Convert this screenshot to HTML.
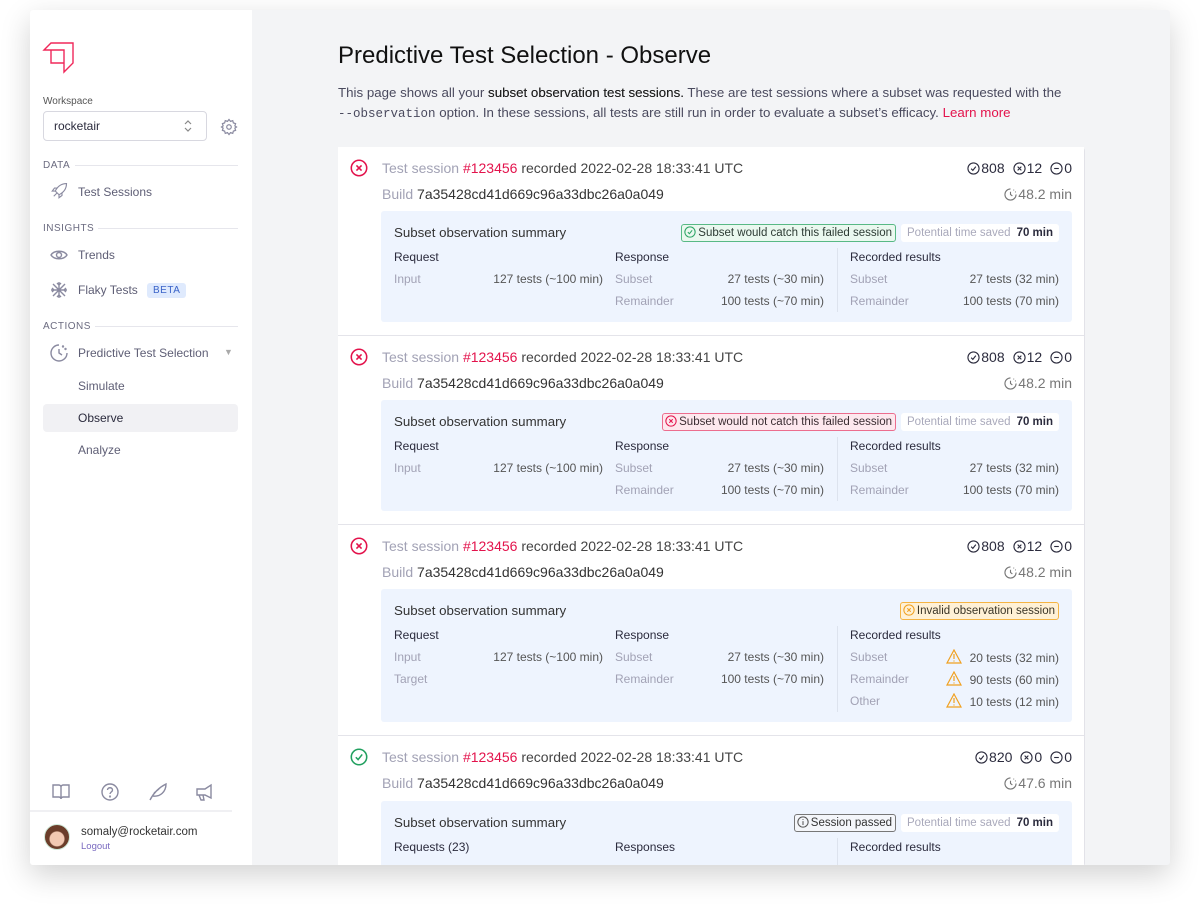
<!DOCTYPE html>
<html><head><meta charset="utf-8"><style>
*{box-sizing:border-box;margin:0;padding:0}
body{width:1200px;height:915px;background:#fff;font-family:"Liberation Sans",sans-serif;color:#2b2b3d;position:relative;overflow:hidden}
.win{position:absolute;left:30px;top:10px;width:1140px;height:855px;background:#f3f4f6;box-shadow:0 10px 30px rgba(0,0,0,.18);overflow:hidden;border-radius:3px}
.side{position:absolute;left:0;top:0;width:222px;height:855px;background:#fff}
.a{position:absolute;white-space:nowrap}
.sec{position:absolute;font-size:10px;letter-spacing:.5px;color:#6b6b80}
.line{position:absolute;height:1px;background:#e6e6ec}
.nav{position:absolute;font-size:12px;color:#5e5e75}
.card{position:absolute;left:308px;width:746px;background:#fff;border-bottom:1px solid #e4e4ea}
.t{position:absolute;font-size:14px;line-height:18px;white-space:nowrap}
.g{color:#a2a2b5}
.r{color:#e3134c}
.box{position:absolute;left:43px;width:691px;background:#eef4fe;border-radius:3px}
.s{position:absolute;font-size:12px;line-height:16px;white-space:nowrap}
.badge{position:absolute;top:13px;height:18px;font-size:11.5px;line-height:16px;border:1px solid;border-radius:3px;padding:0 3px 0 2px;white-space:nowrap}
.badge svg{vertical-align:-2px;margin-right:2px}
.pts{position:absolute;top:13px;height:18px;right:13px;background:#fff;border-radius:3px;font-size:11.5px;line-height:18px;padding:0 6px;color:#a9a9bb;white-space:nowrap}
.pts b{color:#2b2b3d;margin-left:6px}
.div{position:absolute;left:456px;top:37px;width:1px;background:#dde3ee}
.ic{vertical-align:-2px;margin-right:1px}
.st{margin-left:8px}
</style></head><body>
<svg width="0" height="0" style="position:absolute">
<defs>
<symbol id="ok" viewBox="0 0 14 14"><circle cx="7" cy="7" r="6" fill="none" stroke="currentColor" stroke-width="1.2"/><path d="M4.5 7.2L6.3 9L9.5 5" fill="none" stroke="currentColor" stroke-width="1.2"/></symbol>
<symbol id="x" viewBox="0 0 14 14"><circle cx="7" cy="7" r="6" fill="none" stroke="currentColor" stroke-width="1.2"/><path d="M5 5L9 9M9 5L5 9" fill="none" stroke="currentColor" stroke-width="1.2"/></symbol>
<symbol id="m" viewBox="0 0 14 14"><circle cx="7" cy="7" r="6" fill="none" stroke="currentColor" stroke-width="1.2"/><path d="M4.5 7H9.5" fill="none" stroke="currentColor" stroke-width="1.2"/></symbol>
<symbol id="c" viewBox="0 0 14 14"><path d="M7 1A6 6 0 1 0 13 7" fill="none" stroke="currentColor" stroke-width="1.2"/><path d="M7 4V7L9 8.5" fill="none" stroke="currentColor" stroke-width="1.2"/><circle cx="10.5" cy="2.2" r=".6" fill="currentColor"/><circle cx="12.3" cy="4.3" r=".6" fill="currentColor"/></symbol>
</defs></svg>
<div class="win">
<div class="side">
<svg class="a" style="left:12px;top:31px" width="34" height="34" viewBox="0 0 34 34" fill="none" stroke="#f0285a" stroke-width="1.4"><path d="M2 9 L9 2 L31 2 L31 22 L22 31 L22 22 L9 22 L9 9 Z M2 9 L22 9 L22 22"/></svg>
<div class="a" style="left:13px;top:86px;font-size:10px;color:#555">Workspace</div>
<div class="a" style="left:13px;top:101px;width:164px;height:30px;border:1px solid #d8d8e0;border-radius:4px;font-size:12px;line-height:28px;padding-left:10px">rocketair</div>
<svg class="a" style="left:153px;top:109px" width="10" height="14" viewBox="0 0 10 14" fill="none" stroke="#888" stroke-width="1.2"><path d="M2 5 L5 2 L8 5 M2 9 L5 12 L8 9"/></svg>
<svg class="a" style="left:190px;top:108px" width="18" height="18" viewBox="0 0 24 24" fill="none" stroke="#8a8aa0" stroke-width="1.6"><circle cx="12" cy="12" r="3"/><path d="M12 2l2 2.5 3-1 .8 3 3 1-1 3L22 12l-2.2 1.5 1 3-3 1-.8 3-3-1L12 22l-2-2.5-3 1-.8-3-3-1 1-3L2 12l2.2-1.5-1-3 3-1 .8-3 3 1z"/></svg>
<div class="sec" style="left:13px;top:150px">DATA</div><div class="line" style="left:45px;top:155px;width:163px"></div>
<svg class="a" style="left:20px;top:172px" width="18" height="18" viewBox="0 0 24 24" fill="none" stroke="#8a8aa0" stroke-width="1.5"><path d="M5 19 L9 15 M22 2 C15 2 10 6 7 12 L12 17 C18 14 22 9 22 2Z M7 12 L3 12 L6 8 L10 8 M12 17 L12 21 L16 18 L16 14"/></svg>
<div class="nav" style="left:48px;top:175px">Test Sessions</div>
<div class="sec" style="left:13px;top:213px">INSIGHTS</div><div class="line" style="left:68px;top:218px;width:140px"></div>
<svg class="a" style="left:20px;top:238px" width="18" height="14" viewBox="0 0 18 14" fill="none" stroke="#8a8aa0" stroke-width="1.4"><path d="M1 7 C4 2 14 2 17 7 C14 12 4 12 1 7Z"/><circle cx="9" cy="7" r="2.5"/></svg>
<div class="nav" style="left:48px;top:238px">Trends</div>
<svg class="a" style="left:20px;top:271px" width="18" height="18" viewBox="0 0 18 18" fill="none" stroke="#8a8aa0" stroke-width="1.4"><path d="M9 1V17M1 9H17M3 3L15 15M15 3L3 15M7 2L9 4L11 2M7 16L9 14L11 16M2 7L4 9L2 11M16 7L14 9L16 11"/></svg>
<div class="nav" style="left:48px;top:273px">Flaky Tests</div>
<div class="a" style="left:117px;top:273px;background:#dfeafd;color:#3a63c8;font-size:10px;padding:2px 6px;border-radius:3px;letter-spacing:.5px">BETA</div>
<div class="sec" style="left:13px;top:311px">ACTIONS</div><div class="line" style="left:65px;top:316px;width:143px"></div>
<svg class="a" style="left:20px;top:334px" width="18" height="18" viewBox="0 0 18 18" fill="none" stroke="#8a8aa0" stroke-width="1.4"><path d="M9 1 A8 8 0 1 0 17 9"/><path d="M9 5V9L12 11"/><circle cx="13" cy="2.5" r=".5"/><circle cx="15.5" cy="5" r=".5"/></svg>
<div class="nav" style="left:48px;top:336px">Predictive Test Selection</div>
<div class="a" style="left:194px;top:337px;font-size:9px;color:#aaa">▼</div>
<div class="nav" style="left:48px;top:369px">Simulate</div>
<div class="a" style="left:13px;top:394px;width:195px;height:28px;background:#f1f1f4;border-radius:4px"></div>
<div class="nav" style="left:48px;top:401px;color:#2b2b3d">Observe</div>
<div class="nav" style="left:48px;top:433px">Analyze</div>
<svg class="a" style="left:21px;top:772px" width="170" height="20" viewBox="0 0 170 20" fill="none" stroke="#8a8aa0" stroke-width="1.4"><path d="M2 3H8C9 3 10 4 10 5V17C10 16 9 15 8 15H2Z M18 3H12C11 3 10 4 10 5V17C10 16 11 15 12 15H18Z"/><circle cx="59" cy="10" r="8"/><path d="M56.5 8C56.5 5 61.5 5 61.5 8C61.5 10 59 10 59 12"/><circle cx="59" cy="14.5" r=".4"/><path d="M99 18C103 10 109 5 115 2C115 10 109 15 102 14 M103 11L108 7"/><path d="M160 3V16L154 13H146V7H154Z M148 13L150 18H153L152 13"/></svg>
<div class="line" style="left:0;top:800px;width:202px;height:2px;background:#f0f0f3"></div>
<div class="a" style="left:14px;top:814px;width:26px;height:26px;border-radius:50%;background:radial-gradient(circle at 50% 58%,#f2c9b2 0 7px,#6b3d2a 8px);border:1px solid #cfe8d8"></div>
<div class="a" style="left:51px;top:816px;font-size:11.5px;color:#333">somaly@rocketair.com</div>
<div class="a" style="left:51px;top:831px;font-size:9.5px;color:#7a6ac0">Logout</div>
</div>

<div class="a" style="left:308px;top:32px;font-size:24px;color:#111">Predictive Test Selection - Observe</div>
<div class="a" style="left:308px;top:73px;font-size:13.3px;line-height:20px;color:#4a4a5e">This page shows all your <span style="color:#222;text-shadow:0 0 .3px #222">subset observation test sessions.</span> These are test sessions where a subset was requested with the<br><span style="font-family:'Liberation Mono',monospace;font-size:12.5px">--observation</span> option. In these sessions, all tests are still run in order to evaluate a subset’s efficacy. <span class="r">Learn more</span></div>

<div class="a" style="left:308px;top:137px;width:747px;height:720px;background:#fff;border:1px solid #e2e2e8;border-radius:4px"></div>

<div class="card" style="top:137px;height:189px">
 <svg class="a" style="left:12px;top:12px;color:#e3134c" width="18" height="18"><use href="#x"/></svg>
 <div class="t g" style="left:44px;top:12px">Test session <span class="r">#123456</span> <span style="color:#444">recorded 2022-02-28 18:33:41 UTC</span></div>
 <div class="t" style="right:12px;top:12px"><svg class="ic" width="13" height="13"><use href="#ok"/></svg>808<svg class="ic st" width="13" height="13"><use href="#x"/></svg>12<svg class="ic st" width="13" height="13"><use href="#m"/></svg>0</div>
 <div class="t g" style="left:44px;top:38px">Build <span style="color:#333">7a35428cd41d669c96a33dbc26a0a049</span></div>
 <div class="t" style="right:12px;top:38px;color:#777"><svg class="ic" width="13" height="13"><use href="#c"/></svg>48.2 min</div>
 <div class="box" style="top:64px;height:111px">
  <div class="s" style="left:13px;top:14px;font-size:13.3px;color:#333">Subset observation summary</div>
  <div class="badge" style="right:176px;color:#2d3b34;background:#eaf8ef;border-color:#58b985"><svg width="12" height="12" style="color:#2aa464"><use href="#ok"/></svg>Subset would catch this failed session</div>
  <div class="pts">Potential time saved<b>70 min</b></div>
  <div class="s" style="left:13px;top:38px">Request</div><div class="s" style="left:234px;top:38px">Response</div><div class="s" style="left:469px;top:38px">Recorded results</div>
  <div class="s g" style="left:13px;top:60px">Input</div><div class="s" style="right:469px;top:60px;color:#555">127 tests (~100 min)</div>
  <div class="s g" style="left:234px;top:60px">Subset</div><div class="s" style="right:248px;top:60px;color:#555">27 tests (~30 min)</div>
  <div class="s g" style="left:234px;top:82px">Remainder</div><div class="s" style="right:248px;top:82px;color:#555">100 tests (~70 min)</div>
  <div class="div" style="height:64px"></div>
  <div class="s g" style="left:469px;top:60px">Subset</div><div class="s" style="right:13px;top:60px;color:#555">27 tests (32 min)</div>
  <div class="s g" style="left:469px;top:82px">Remainder</div><div class="s" style="right:13px;top:82px;color:#555">100 tests (70 min)</div>
 </div>
</div>

<div class="card" style="top:326px;height:189px">
 <svg class="a" style="left:12px;top:12px;color:#e3134c" width="18" height="18"><use href="#x"/></svg>
 <div class="t g" style="left:44px;top:12px">Test session <span class="r">#123456</span> <span style="color:#444">recorded 2022-02-28 18:33:41 UTC</span></div>
 <div class="t" style="right:12px;top:12px"><svg class="ic" width="13" height="13"><use href="#ok"/></svg>808<svg class="ic st" width="13" height="13"><use href="#x"/></svg>12<svg class="ic st" width="13" height="13"><use href="#m"/></svg>0</div>
 <div class="t g" style="left:44px;top:38px">Build <span style="color:#333">7a35428cd41d669c96a33dbc26a0a049</span></div>
 <div class="t" style="right:12px;top:38px;color:#777"><svg class="ic" width="13" height="13"><use href="#c"/></svg>48.2 min</div>
 <div class="box" style="top:64px;height:111px">
  <div class="s" style="left:13px;top:14px;font-size:13.3px;color:#333">Subset observation summary</div>
  <div class="badge" style="right:176px;color:#3b2d33;background:#fde8ee;border-color:#ec6d8e"><svg width="12" height="12" style="color:#e3134c"><use href="#x"/></svg>Subset would not catch this failed session</div>
  <div class="pts">Potential time saved<b>70 min</b></div>
  <div class="s" style="left:13px;top:38px">Request</div><div class="s" style="left:234px;top:38px">Response</div><div class="s" style="left:469px;top:38px">Recorded results</div>
  <div class="s g" style="left:13px;top:60px">Input</div><div class="s" style="right:469px;top:60px;color:#555">127 tests (~100 min)</div>
  <div class="s g" style="left:234px;top:60px">Subset</div><div class="s" style="right:248px;top:60px;color:#555">27 tests (~30 min)</div>
  <div class="s g" style="left:234px;top:82px">Remainder</div><div class="s" style="right:248px;top:82px;color:#555">100 tests (~70 min)</div>
  <div class="div" style="height:64px"></div>
  <div class="s g" style="left:469px;top:60px">Subset</div><div class="s" style="right:13px;top:60px;color:#555">27 tests (32 min)</div>
  <div class="s g" style="left:469px;top:82px">Remainder</div><div class="s" style="right:13px;top:82px;color:#555">100 tests (70 min)</div>
 </div>
</div>

<div class="card" style="top:515px;height:211px">
 <svg class="a" style="left:12px;top:12px;color:#e3134c" width="18" height="18"><use href="#x"/></svg>
 <div class="t g" style="left:44px;top:12px">Test session <span class="r">#123456</span> <span style="color:#444">recorded 2022-02-28 18:33:41 UTC</span></div>
 <div class="t" style="right:12px;top:12px"><svg class="ic" width="13" height="13"><use href="#ok"/></svg>808<svg class="ic st" width="13" height="13"><use href="#x"/></svg>12<svg class="ic st" width="13" height="13"><use href="#m"/></svg>0</div>
 <div class="t g" style="left:44px;top:38px">Build <span style="color:#333">7a35428cd41d669c96a33dbc26a0a049</span></div>
 <div class="t" style="right:12px;top:38px;color:#777"><svg class="ic" width="13" height="13"><use href="#c"/></svg>48.2 min</div>
 <div class="box" style="top:64px;height:133px">
  <div class="s" style="left:13px;top:14px;font-size:13.3px;color:#333">Subset observation summary</div>
  <div class="badge" style="right:13px;color:#3b3526;background:#fff1d6;border-color:#f5b443"><svg width="12" height="12" style="color:#f0a020"><use href="#x"/></svg>Invalid observation session</div>
  <div class="s" style="left:13px;top:38px">Request</div><div class="s" style="left:234px;top:38px">Response</div><div class="s" style="left:469px;top:38px">Recorded results</div>
  <div class="s g" style="left:13px;top:60px">Input</div><div class="s" style="right:469px;top:60px;color:#555">127 tests (~100 min)</div>
  <div class="s g" style="left:13px;top:82px">Target</div>
  <div class="s g" style="left:234px;top:60px">Subset</div><div class="s" style="right:248px;top:60px;color:#555">27 tests (~30 min)</div>
  <div class="s g" style="left:234px;top:82px">Remainder</div><div class="s" style="right:248px;top:82px;color:#555">100 tests (~70 min)</div>
  <div class="div" style="height:86px"></div>
  <div class="s g" style="left:469px;top:60px">Subset</div><div class="s" style="right:13px;top:60px;color:#555"><svg class="ic" width="16" height="15" viewBox="0 0 16 15" fill="none" stroke="#f0a020" stroke-width="1.2"><path d="M8 1L15 14H1Z M8 5V10 M8 11.5V12.5"/></svg>&nbsp; 20 tests (32 min)</div>
  <div class="s g" style="left:469px;top:82px">Remainder</div><div class="s" style="right:13px;top:82px;color:#555"><svg class="ic" width="16" height="15" viewBox="0 0 16 15" fill="none" stroke="#f0a020" stroke-width="1.2"><path d="M8 1L15 14H1Z M8 5V10 M8 11.5V12.5"/></svg>&nbsp; 90 tests (60 min)</div>
  <div class="s g" style="left:469px;top:104px">Other</div><div class="s" style="right:13px;top:104px;color:#555"><svg class="ic" width="16" height="15" viewBox="0 0 16 15" fill="none" stroke="#f0a020" stroke-width="1.2"><path d="M8 1L15 14H1Z M8 5V10 M8 11.5V12.5"/></svg>&nbsp; 10 tests (12 min)</div>
 </div>
</div>

<div class="card" style="top:726px;height:140px;border:none">
 <svg class="a" style="left:12px;top:12px;color:#22a060" width="18" height="18"><use href="#ok"/></svg>
 <div class="t g" style="left:44px;top:12px">Test session <span class="r">#123456</span> <span style="color:#444">recorded 2022-02-28 18:33:41 UTC</span></div>
 <div class="t" style="right:12px;top:12px"><svg class="ic" width="13" height="13"><use href="#ok"/></svg>820<svg class="ic st" width="13" height="13"><use href="#x"/></svg>0<svg class="ic st" width="13" height="13"><use href="#m"/></svg>0</div>
 <div class="t g" style="left:44px;top:38px">Build <span style="color:#333">7a35428cd41d669c96a33dbc26a0a049</span></div>
 <div class="t" style="right:12px;top:38px;color:#777"><svg class="ic" width="13" height="13"><use href="#c"/></svg>47.6 min</div>
 <div class="box" style="top:65px;height:111px">
  <div class="s" style="left:13px;top:14px;font-size:13.3px;color:#333">Subset observation summary</div>
  <div class="badge" style="right:176px;color:#333;background:#f4f6fa;border-color:#777"><svg width="12" height="12" viewBox="0 0 14 14" fill="none" stroke="#555" stroke-width="1.2"><circle cx="7" cy="7" r="6"/><path d="M7 6V10.5M7 3.5V4.5"/></svg>Session passed</div>
  <div class="pts">Potential time saved<b>70 min</b></div>
  <div class="s" style="left:13px;top:38px">Requests (23)</div><div class="s" style="left:234px;top:38px">Responses</div><div class="s" style="left:469px;top:38px">Recorded results</div>
  <div class="div" style="height:64px"></div>
 </div>
</div>
</div>
</body></html>
